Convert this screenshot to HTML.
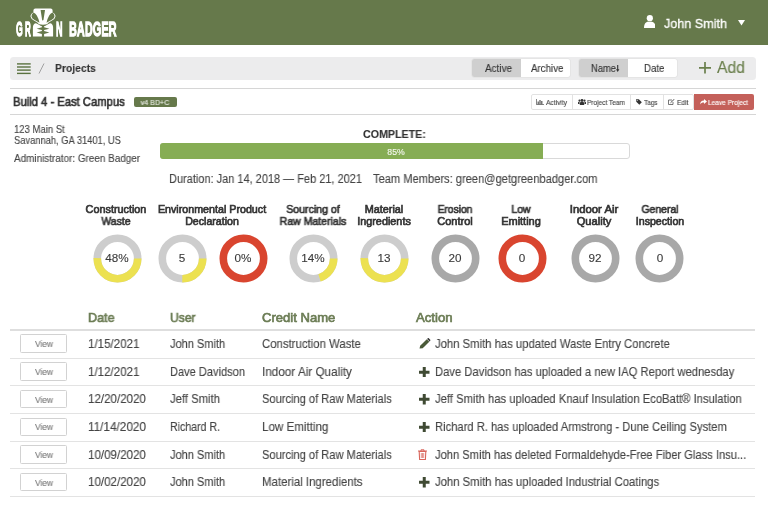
<!DOCTYPE html>
<html><head><meta charset="utf-8"><style>
html,body{margin:0;padding:0;background:#fff;width:768px;height:512px;overflow:hidden;}
body{position:relative;font-family:"Liberation Sans",sans-serif;}
.t{position:absolute;white-space:nowrap;will-change:transform;-webkit-text-stroke:0.12px currentColor;}
.r{position:absolute;}
</style></head><body>
<div class="r" style="left:0px;top:0px;width:768px;height:45px;background:#66794b;"></div>
<div class="t" style="left:15.7px;top:19px;font-size:20.6px;line-height:20.6px;font-weight:700;color:#fff;letter-spacing:0px;transform:scaleX(0.4244);transform-origin:0 50%;-webkit-text-stroke:1.4px #fff;">G</div>
<div class="t" style="left:25.1px;top:19px;font-size:20.6px;line-height:20.6px;font-weight:700;color:#fff;letter-spacing:0px;transform:scaleX(0.3899);transform-origin:0 50%;-webkit-text-stroke:1.4px #fff;">R</div>
<div class="t" style="left:55.8px;top:19px;font-size:20.6px;line-height:20.6px;font-weight:700;color:#fff;letter-spacing:0px;transform:scaleX(0.4369);transform-origin:0 50%;-webkit-text-stroke:1.4px #fff;">N</div>
<div class="t" style="left:69.1px;top:19px;font-size:20.6px;line-height:20.6px;font-weight:700;color:#fff;letter-spacing:0px;transform:scaleX(0.5332);transform-origin:0 50%;-webkit-text-stroke:1.3px #fff;">BADGER</div>
<svg class="r" style="left:26px;top:4px" width="36" height="36" viewBox="0 0 36 36">
<path d="M9.4 4.4 L24.6 4.4 Q26.6 4.4 26.6 6.4 L26.6 8.4 Q29.7 9.8 29.5 12.6 Q29.1 15.1 26 16.6 L22.6 18.6 Q21.6 20.8 17 20.8 Q12.4 20.8 11.4 18.6 L8 16.6 Q4.9 15.1 4.5 12.6 Q4.3 9.8 7.4 8.4 L7.4 6.4 Q7.4 4.4 9.4 4.4 Z" fill="#fff"/>
<path d="M14.6 6.0 L19.0 6.0 L17.5 15.8 L16.8 16.8 L16.1 15.8 Z" fill="#66794b"/>
<path d="M7.6 8.4 Q5.2 10 5.5 12.5 Q5.9 14.7 8.6 16.1 L13.5 18.7 Q12.8 14.8 10.8 11.4 Q9.6 9.4 7.6 8.4 Z" fill="#66794b"/>
<path d="M 26.40 8.40 Q 28.80 10.00 28.50 12.50 Q 28.10 14.70 25.40 16.10 L 20.50 18.70 Q 21.20 14.80 23.20 11.40 Q 24.40 9.40 26.40 8.40 Z" fill="#66794b"/>
<path d="M6.9 32.6 L6.9 23.5 C6.9 21 8.2 19.2 10 19.2 L12.5 20.6 L14.5 21.8 L15.9 22.3 L15.9 23.2 L10.6 24.7 L15.9 26 L15.9 27.1 L10.6 28.6 L15.9 29.9 L15.9 32.6 Z" fill="#fff"/>
<path d="M 27.10 32.60 L 27.10 23.50 C 27.10 21.00 25.80 19.20 24.00 19.20 L 21.50 20.60 L 19.50 21.80 L 18.10 22.30 L 18.10 23.20 L 23.40 24.70 L 18.10 26.00 L 18.10 27.10 L 23.40 28.60 L 18.10 29.90 L 18.10 32.60 Z" fill="#fff"/>
</svg>
<svg class="r" style="left:643.5px;top:15px" width="11.7" height="13" viewBox="0 0 11.7 13">
<circle cx="5.85" cy="3.2" r="3.1" fill="#fff"/>
<path d="M0 13 C0 9 1.8 6.8 4 6.8 L7.7 6.8 C9.9 6.8 11.7 9 11.7 13 Z" fill="#fff"/>
</svg>
<div class="t" style="left:663.9px;top:17px;font-size:13.5px;line-height:13.5px;font-weight:400;color:#fff;letter-spacing:0px;transform:scaleX(0.9329);transform-origin:0 50%;-webkit-text-stroke:0.3px #fff;">John Smith</div>
<svg class="r" style="left:737.6px;top:20.2px" width="7" height="5.6" viewBox="0 0 7 5.6"><path d="M0 0 L7 0 L3.5 5.6 Z" fill="#fff"/></svg>
<div class="r" style="left:9.5px;top:56.8px;width:746.5px;height:22.8px;background:#ececed;border-radius:3.5px;"></div>
<svg class="r" style="left:17.2px;top:62px" width="14" height="13" viewBox="0 0 14 13">
<rect x="0" y="1.2" width="13.7" height="1.4" fill="#5a7240"/>
<rect x="0" y="4.3" width="13.7" height="1.4" fill="#5a7240"/>
<rect x="0" y="7.4" width="13.7" height="1.4" fill="#5a7240"/>
<rect x="0" y="10.7" width="13.7" height="1.4" fill="#5a7240"/>
</svg>
<svg class="r" style="left:38px;top:63px" width="7" height="11" viewBox="0 0 7 11"><path d="M6 0.5 L1 10.5" stroke="#999" stroke-width="0.9"/></svg>
<div class="t" style="left:55.4px;top:62px;font-size:11.6px;line-height:11.6px;font-weight:700;color:#333;letter-spacing:0px;transform:scaleX(0.8935);transform-origin:0 50%;">Projects</div>
<div class="r" style="left:472px;top:59px;width:98px;height:18px;background:#fff;border-radius:2px;box-shadow:0 0 0 0.5px #ddd;"></div>
<div class="r" style="left:472px;top:59px;width:49px;height:18px;background:#cfcfcf;border-radius:2px 0 0 2px;"></div>
<div class="t" style="left:485px;top:63px;font-size:10.6px;line-height:10.6px;font-weight:400;color:#333;letter-spacing:0px;transform:scaleX(0.9354);transform-origin:0 50%;">Active</div>
<div class="t" style="left:531px;top:63px;font-size:10.6px;line-height:10.6px;font-weight:400;color:#333;letter-spacing:0px;transform:scaleX(0.9167);transform-origin:0 50%;">Archive</div>
<div class="r" style="left:578.5px;top:59px;width:98px;height:18px;background:#fff;border-radius:2px;box-shadow:0 0 0 0.5px #ddd;"></div>
<div class="r" style="left:578.5px;top:59px;width:49.5px;height:18px;background:#cfcfcf;border-radius:2px 0 0 2px;"></div>
<div class="t" style="left:590.8px;top:63px;font-size:10.6px;line-height:10.6px;font-weight:400;color:#333;letter-spacing:0px;transform:scaleX(0.8842);transform-origin:0 50%;">Name</div>
<svg class="r" style="left:616.3px;top:64.8px" width="3.4" height="7" viewBox="0 0 3.4 7"><path d="M1.7 0 V5" stroke="#333" stroke-width="1.1"/><path d="M0 4.2 L3.4 4.2 L1.7 7 Z" fill="#333"/></svg>
<div class="t" style="left:643.6px;top:63px;font-size:10.6px;line-height:10.6px;font-weight:400;color:#333;letter-spacing:0px;transform:scaleX(0.9111);transform-origin:0 50%;">Date</div>
<svg class="r" style="left:698.5px;top:62px" width="12" height="12" viewBox="0 0 12 12"><path d="M6 0 V11.6 M0 5.8 H12" stroke="#6a7f4c" stroke-width="1.7"/></svg>
<div class="t" style="left:717.0px;top:59px;font-size:16.2px;line-height:16.2px;font-weight:400;color:#6a7f4c;letter-spacing:0px;transform:scaleX(0.9714);transform-origin:0 50%;">Add</div>
<div class="r" style="left:10px;top:88px;width:746px;height:1px;background:#d6d6d6;"></div>
<div class="r" style="left:10px;top:114px;width:746px;height:1px;background:#d6d6d6;"></div>
<div class="t" style="left:13.2px;top:96px;font-size:12.2px;line-height:12.2px;font-weight:400;color:#333;letter-spacing:0px;transform:scaleX(0.9211);transform-origin:0 50%;-webkit-text-stroke:0.65px currentColor;">Build 4 - East Campus</div>
<div class="r" style="left:134px;top:96.6px;width:43px;height:10.4px;background:#66794b;border-radius:2px;"></div>
<div class="t" style="left:155.4px;top:99px;font-size:7.2px;line-height:7.2px;font-weight:400;color:#eef0ea;letter-spacing:0px;transform:translateX(-50%) scaleX(0.9927);transform-origin:50% 50%;">v4 BD+C</div>
<div class="r" style="left:530.5px;top:94px;width:163px;height:15.5px;background:#fff;border:1px solid #e2e2e2;border-radius:2px;box-sizing:border-box;"></div>
<div class="r" style="left:572px;top:94px;width:1px;height:15.5px;background:#e2e2e2;"></div>
<div class="r" style="left:630px;top:94px;width:1px;height:15.5px;background:#e2e2e2;"></div>
<div class="r" style="left:663px;top:94px;width:1px;height:15.5px;background:#e2e2e2;"></div>
<div class="r" style="left:693.5px;top:94px;width:60.5px;height:15.5px;background:#c4605a;border-radius:0 2px 2px 0;"></div>
<div class="t" style="left:546px;top:99px;font-size:7.3px;line-height:7.3px;font-weight:400;color:#444;letter-spacing:0px;transform:scaleX(0.9083);transform-origin:0 50%;">Activity</div>
<div class="t" style="left:587px;top:99px;font-size:7.3px;line-height:7.3px;font-weight:400;color:#444;letter-spacing:0px;transform:scaleX(0.8948);transform-origin:0 50%;">Project Team</div>
<div class="t" style="left:644px;top:99px;font-size:7.3px;line-height:7.3px;font-weight:400;color:#444;letter-spacing:0px;transform:scaleX(0.8755);transform-origin:0 50%;">Tags</div>
<div class="t" style="left:676.9px;top:99px;font-size:7.3px;line-height:7.3px;font-weight:400;color:#444;letter-spacing:0px;transform:scaleX(0.9063);transform-origin:0 50%;">Edit</div>
<div class="t" style="left:708px;top:99px;font-size:7.3px;line-height:7.3px;font-weight:400;color:#fff;letter-spacing:0px;transform:scaleX(0.8961);transform-origin:0 50%;">Leave Project</div>
<svg class="r" style="left:536px;top:99px" width="8" height="6" viewBox="0 0 8 6"><path d="M0.4 0 V5.6 H8" stroke="#555" stroke-width="0.8" fill="none"/><rect x="1.6" y="2.5" width="1.2" height="2.8" fill="#555"/><rect x="3.4" y="1" width="1.2" height="4.3" fill="#555"/><rect x="5.2" y="2" width="1.2" height="3.3" fill="#555"/></svg>
<svg class="r" style="left:578px;top:99px" width="8" height="6" viewBox="0 0 8 6"><circle cx="4" cy="1.5" r="1.4" fill="#333"/><circle cx="1.5" cy="1.7" r="1.1" fill="#333"/><circle cx="6.5" cy="1.7" r="1.1" fill="#333"/><path d="M1.8 6 V4 C1.8 3.2 2.5 3 4 3 C5.5 3 6.2 3.2 6.2 4 V6 Z" fill="#333"/><path d="M0 5 V3.6 C0 3 .5 3 1.5 3 L1.5 5Z M8 5 V3.6 C8 3 7.5 3 6.5 3 L6.5 5Z" fill="#333"/></svg>
<svg class="r" style="left:636px;top:99px" width="6" height="6" viewBox="0 0 6 6"><path d="M0 0.3 H2.8 L5.8 3.3 L3.3 5.8 L0.3 2.8 Z" fill="#333"/><circle cx="1.2" cy="1.4" r="0.5" fill="#fff"/></svg>
<svg class="r" style="left:668px;top:99px" width="7" height="6" viewBox="0 0 7 6"><path d="M4 1 H0.5 V5.5 H5 V3" stroke="#555" stroke-width="0.8" fill="none"/><path d="M2.5 3.8 L6.5 0" stroke="#555" stroke-width="1"/></svg>
<svg class="r" style="left:700px;top:99px" width="7" height="6" viewBox="0 0 7 6"><path d="M4 0 L7 2.5 L4 5 V3.5 C2 3.5 1 4 0 5.5 C0.3 3 1.5 1.6 4 1.5 Z" fill="#fff"/></svg>
<div class="t" style="left:14.2px;top:125px;font-size:10.4px;line-height:10.4px;font-weight:400;color:#444444;letter-spacing:0px;transform:scaleX(0.9144);transform-origin:0 50%;">123 Main St</div>
<div class="t" style="left:14.2px;top:136px;font-size:10.4px;line-height:10.4px;font-weight:400;color:#444444;letter-spacing:0px;transform:scaleX(0.8983);transform-origin:0 50%;">Savannah, GA 31401, US</div>
<div class="t" style="left:14.2px;top:154px;font-size:10.4px;line-height:10.4px;font-weight:400;color:#444444;letter-spacing:0px;transform:scaleX(0.9534);transform-origin:0 50%;">Administrator: Green Badger</div>
<div class="t" style="left:363px;top:129px;font-size:10.75px;line-height:10.75px;font-weight:700;color:#333;letter-spacing:0px;transform:scaleX(0.9920);transform-origin:0 50%;">COMPLETE:</div>
<div class="r" style="left:160px;top:143.2px;width:470px;height:16px;background:#fff;border:1px solid #d9d9d9;border-radius:3px;box-sizing:border-box;"></div>
<div class="r" style="left:160px;top:143.2px;width:383px;height:16px;background:#86ad54;border-radius:3px 0 0 3px;"></div>
<div class="t" style="left:396px;top:148px;font-size:8.7px;line-height:8.7px;font-weight:400;color:#f4f7ee;letter-spacing:0px;transform:translateX(-50%) scaleX(1.0000);transform-origin:50% 50%;">85%</div>
<div class="t" style="left:168.6px;top:173px;font-size:12.3px;line-height:12.3px;font-weight:400;color:#444444;letter-spacing:0px;transform:scaleX(0.8932);transform-origin:0 50%;">Duration: Jan 14, 2018 &#8212; Feb 21, 2021</div>
<div class="t" style="left:372.9px;top:173px;font-size:12.3px;line-height:12.3px;font-weight:400;color:#444444;letter-spacing:0px;transform:scaleX(0.9043);transform-origin:0 50%;">Team Members: green@getgreenbadger.com</div>
<svg class="r" style="left:92.8px;top:234.0px" width="49" height="49" viewBox="0 0 49 49"><circle cx="24.5" cy="24.5" r="20.2" fill="none" stroke="#cdcdcd" stroke-width="7.6"/><circle cx="24.5" cy="24.5" r="20.2" fill="none" stroke="#ece151" stroke-width="7.6" stroke-dasharray="63.46 126.92"/></svg>
<div class="t" style="left:117.3px;top:252px;font-size:11.7px;line-height:11.7px;font-weight:400;color:#3a3a3a;letter-spacing:0px;transform:translateX(-50%) scaleX(1.0000);transform-origin:50% 50%;">48%</div>
<svg class="r" style="left:157.5px;top:234.0px" width="49" height="49" viewBox="0 0 49 49"><circle cx="24.5" cy="24.5" r="20.2" fill="none" stroke="#cdcdcd" stroke-width="7.6"/><circle cx="24.5" cy="24.5" r="20.2" fill="none" stroke="#ece151" stroke-width="7.6" stroke-dasharray="31.73 126.92"/></svg>
<div class="t" style="left:182px;top:252px;font-size:11.7px;line-height:11.7px;font-weight:400;color:#3a3a3a;letter-spacing:0px;transform:translateX(-50%) scaleX(1.0000);transform-origin:50% 50%;">5</div>
<svg class="r" style="left:218.5px;top:234.0px" width="49" height="49" viewBox="0 0 49 49"><circle cx="24.5" cy="24.5" r="20.2" fill="none" stroke="#d9452f" stroke-width="7.6"/></svg>
<div class="t" style="left:243px;top:252px;font-size:11.7px;line-height:11.7px;font-weight:400;color:#3a3a3a;letter-spacing:0px;transform:translateX(-50%) scaleX(1.0000);transform-origin:50% 50%;">0%</div>
<svg class="r" style="left:288.5px;top:234.0px" width="49" height="49" viewBox="0 0 49 49"><circle cx="24.5" cy="24.5" r="20.2" fill="none" stroke="#cdcdcd" stroke-width="7.6"/><circle cx="24.5" cy="24.5" r="20.2" fill="none" stroke="#ece151" stroke-width="7.6" stroke-dasharray="25.38 126.92"/></svg>
<div class="t" style="left:313px;top:252px;font-size:11.7px;line-height:11.7px;font-weight:400;color:#3a3a3a;letter-spacing:0px;transform:translateX(-50%) scaleX(1.0000);transform-origin:50% 50%;">14%</div>
<svg class="r" style="left:359.5px;top:234.0px" width="49" height="49" viewBox="0 0 49 49"><circle cx="24.5" cy="24.5" r="20.2" fill="none" stroke="#cdcdcd" stroke-width="7.6"/><circle cx="24.5" cy="24.5" r="20.2" fill="none" stroke="#ece151" stroke-width="7.6" stroke-dasharray="63.46 126.92"/></svg>
<div class="t" style="left:384px;top:252px;font-size:11.7px;line-height:11.7px;font-weight:400;color:#3a3a3a;letter-spacing:0px;transform:translateX(-50%) scaleX(1.0000);transform-origin:50% 50%;">13</div>
<svg class="r" style="left:430.5px;top:234.0px" width="49" height="49" viewBox="0 0 49 49"><circle cx="24.5" cy="24.5" r="20.2" fill="none" stroke="#a8a8a8" stroke-width="7.6"/></svg>
<div class="t" style="left:455px;top:252px;font-size:11.7px;line-height:11.7px;font-weight:400;color:#3a3a3a;letter-spacing:0px;transform:translateX(-50%) scaleX(1.0000);transform-origin:50% 50%;">20</div>
<svg class="r" style="left:497.5px;top:234.0px" width="49" height="49" viewBox="0 0 49 49"><circle cx="24.5" cy="24.5" r="20.2" fill="none" stroke="#d9452f" stroke-width="7.6"/></svg>
<div class="t" style="left:522px;top:252px;font-size:11.7px;line-height:11.7px;font-weight:400;color:#3a3a3a;letter-spacing:0px;transform:translateX(-50%) scaleX(1.0000);transform-origin:50% 50%;">0</div>
<svg class="r" style="left:570.5px;top:234.0px" width="49" height="49" viewBox="0 0 49 49"><circle cx="24.5" cy="24.5" r="20.2" fill="none" stroke="#a8a8a8" stroke-width="7.6"/></svg>
<div class="t" style="left:595px;top:252px;font-size:11.7px;line-height:11.7px;font-weight:400;color:#3a3a3a;letter-spacing:0px;transform:translateX(-50%) scaleX(1.0000);transform-origin:50% 50%;">92</div>
<svg class="r" style="left:635.3px;top:234.0px" width="49" height="49" viewBox="0 0 49 49"><circle cx="24.5" cy="24.5" r="20.2" fill="none" stroke="#a8a8a8" stroke-width="7.6"/></svg>
<div class="t" style="left:659.8px;top:252px;font-size:11.7px;line-height:11.7px;font-weight:400;color:#3a3a3a;letter-spacing:0px;transform:translateX(-50%) scaleX(1.0000);transform-origin:50% 50%;">0</div>
<div class="t" style="left:115.6px;top:204px;font-size:10.6px;line-height:10.6px;font-weight:400;color:#333;letter-spacing:0px;transform:translateX(-50%) scaleX(1.0217);transform-origin:50% 50%;-webkit-text-stroke:0.65px currentColor;">Construction</div>
<div class="t" style="left:115.6px;top:216px;font-size:10.6px;line-height:10.6px;font-weight:400;color:#333;letter-spacing:0px;transform:translateX(-50%) scaleX(0.9849);transform-origin:50% 50%;-webkit-text-stroke:0.65px currentColor;">Waste</div>
<div class="t" style="left:211.7px;top:204px;font-size:10.6px;line-height:10.6px;font-weight:400;color:#333;letter-spacing:0px;transform:translateX(-50%) scaleX(1.0100);transform-origin:50% 50%;-webkit-text-stroke:0.65px currentColor;">Environmental Product</div>
<div class="t" style="left:211.7px;top:216px;font-size:10.6px;line-height:10.6px;font-weight:400;color:#333;letter-spacing:0px;transform:translateX(-50%) scaleX(1.0016);transform-origin:50% 50%;-webkit-text-stroke:0.65px currentColor;">Declaration</div>
<div class="t" style="left:313.2px;top:204px;font-size:10.6px;line-height:10.6px;font-weight:400;color:#333;letter-spacing:0px;transform:translateX(-50%) scaleX(0.9977);transform-origin:50% 50%;-webkit-text-stroke:0.65px currentColor;">Sourcing of</div>
<div class="t" style="left:313.2px;top:216px;font-size:10.6px;line-height:10.6px;font-weight:400;color:#333;letter-spacing:0px;transform:translateX(-50%) scaleX(0.9948);transform-origin:50% 50%;-webkit-text-stroke:0.65px currentColor;">Raw Materials</div>
<div class="t" style="left:383.8px;top:204px;font-size:10.6px;line-height:10.6px;font-weight:400;color:#333;letter-spacing:0px;transform:translateX(-50%) scaleX(1.0212);transform-origin:50% 50%;-webkit-text-stroke:0.65px currentColor;">Material</div>
<div class="t" style="left:383.8px;top:216px;font-size:10.6px;line-height:10.6px;font-weight:400;color:#333;letter-spacing:0px;transform:translateX(-50%) scaleX(1.0239);transform-origin:50% 50%;-webkit-text-stroke:0.65px currentColor;">Ingredients</div>
<div class="t" style="left:455px;top:204px;font-size:10.6px;line-height:10.6px;font-weight:400;color:#333;letter-spacing:0px;transform:translateX(-50%) scaleX(0.9627);transform-origin:50% 50%;-webkit-text-stroke:0.65px currentColor;">Erosion</div>
<div class="t" style="left:455px;top:216px;font-size:10.6px;line-height:10.6px;font-weight:400;color:#333;letter-spacing:0px;transform:translateX(-50%) scaleX(1.0418);transform-origin:50% 50%;-webkit-text-stroke:0.65px currentColor;">Control</div>
<div class="t" style="left:520.8px;top:204px;font-size:10.6px;line-height:10.6px;font-weight:400;color:#333;letter-spacing:0px;transform:translateX(-50%) scaleX(0.9874);transform-origin:50% 50%;-webkit-text-stroke:0.65px currentColor;">Low</div>
<div class="t" style="left:520.8px;top:216px;font-size:10.6px;line-height:10.6px;font-weight:400;color:#333;letter-spacing:0px;transform:translateX(-50%) scaleX(1.0368);transform-origin:50% 50%;-webkit-text-stroke:0.65px currentColor;">Emitting</div>
<div class="t" style="left:594px;top:204px;font-size:10.6px;line-height:10.6px;font-weight:400;color:#333;letter-spacing:0px;transform:translateX(-50%) scaleX(1.0690);transform-origin:50% 50%;-webkit-text-stroke:0.65px currentColor;">Indoor Air</div>
<div class="t" style="left:594px;top:216px;font-size:10.6px;line-height:10.6px;font-weight:400;color:#333;letter-spacing:0px;transform:translateX(-50%) scaleX(1.0488);transform-origin:50% 50%;-webkit-text-stroke:0.65px currentColor;">Quality</div>
<div class="t" style="left:659.5px;top:204px;font-size:10.6px;line-height:10.6px;font-weight:400;color:#333;letter-spacing:0px;transform:translateX(-50%) scaleX(0.9811);transform-origin:50% 50%;-webkit-text-stroke:0.65px currentColor;">General</div>
<div class="t" style="left:659.5px;top:216px;font-size:10.6px;line-height:10.6px;font-weight:400;color:#333;letter-spacing:0px;transform:translateX(-50%) scaleX(1.0037);transform-origin:50% 50%;-webkit-text-stroke:0.65px currentColor;">Inspection</div>
<div class="t" style="left:88px;top:312px;font-size:12.8px;line-height:12.8px;font-weight:400;color:#6b7c54;letter-spacing:0px;transform:scaleX(0.9801);transform-origin:0 50%;-webkit-text-stroke:0.65px currentColor;">Date</div>
<div class="t" style="left:169.5px;top:312px;font-size:12.8px;line-height:12.8px;font-weight:400;color:#6b7c54;letter-spacing:0px;transform:scaleX(0.9436);transform-origin:0 50%;-webkit-text-stroke:0.65px currentColor;">User</div>
<div class="t" style="left:262.2px;top:312px;font-size:12.8px;line-height:12.8px;font-weight:400;color:#6b7c54;letter-spacing:0px;transform:scaleX(1.0203);transform-origin:0 50%;-webkit-text-stroke:0.65px currentColor;">Credit Name</div>
<div class="t" style="left:415.8px;top:312px;font-size:12.8px;line-height:12.8px;font-weight:400;color:#6b7c54;letter-spacing:0px;transform:scaleX(1.0288);transform-origin:0 50%;-webkit-text-stroke:0.65px currentColor;">Action</div>
<div class="r" style="left:10px;top:329px;width:745px;height:1.5px;background:#dedede;"></div>
<div class="r" style="left:20.2px;top:334.25px;width:46.4px;height:18.4px;background:#fff;border:1px solid #d2d2d2;border-radius:1.5px;box-sizing:border-box;"></div>
<div class="t" style="left:43.7px;top:340px;font-size:9.2px;line-height:9.2px;font-weight:400;color:#777;letter-spacing:0px;transform:translateX(-50%) scaleX(0.9153);transform-origin:50% 50%;">View</div>
<div class="t" style="left:87.6px;top:338px;font-size:12.4px;line-height:12.4px;font-weight:400;color:#444444;letter-spacing:0px;transform:scaleX(0.9336);transform-origin:0 50%;">1/15/2021</div>
<div class="t" style="left:169.5px;top:338px;font-size:12.4px;line-height:12.4px;font-weight:400;color:#444444;letter-spacing:0px;transform:scaleX(0.8899);transform-origin:0 50%;">John Smith</div>
<div class="t" style="left:261.5px;top:338px;font-size:12.4px;line-height:12.4px;font-weight:400;color:#444444;letter-spacing:0px;transform:scaleX(0.9180);transform-origin:0 50%;">Construction Waste</div>
<svg class="r" style="left:419px;top:338.1px" width="12" height="11" viewBox="0 0 12 11"><path d="M0.5 10.5 L1.2 7.8 L7.8 1.2 L10.3 3.7 L3.7 10.3 Z" fill="#4a5a38"/><path d="M8.6 0.4 C9 0 9.6 0 10 0.4 L11.1 1.5 C11.5 1.9 11.5 2.5 11.1 2.9 L10.6 3.4 L8.1 0.9 Z" fill="#3a3a3a"/></svg>
<div class="t" style="left:434.8px;top:338px;font-size:12.4px;line-height:12.4px;font-weight:400;color:#444444;letter-spacing:0px;transform:scaleX(0.9108);transform-origin:0 50%;">John Smith has updated Waste Entry Concrete</div>
<div class="r" style="left:10px;top:357.6px;width:745px;height:1px;background:#e3e3e3;"></div>
<div class="r" style="left:20.2px;top:362.2px;width:46.4px;height:18.4px;background:#fff;border:1px solid #d2d2d2;border-radius:1.5px;box-sizing:border-box;"></div>
<div class="t" style="left:43.7px;top:368px;font-size:9.2px;line-height:9.2px;font-weight:400;color:#777;letter-spacing:0px;transform:translateX(-50%) scaleX(0.9153);transform-origin:50% 50%;">View</div>
<div class="t" style="left:87.6px;top:366px;font-size:12.4px;line-height:12.4px;font-weight:400;color:#444444;letter-spacing:0px;transform:scaleX(0.9336);transform-origin:0 50%;">1/12/2021</div>
<div class="t" style="left:169.5px;top:366px;font-size:12.4px;line-height:12.4px;font-weight:400;color:#444444;letter-spacing:0px;transform:scaleX(0.8919);transform-origin:0 50%;">Dave Davidson</div>
<div class="t" style="left:261.5px;top:366px;font-size:12.4px;line-height:12.4px;font-weight:400;color:#444444;letter-spacing:0px;transform:scaleX(0.9462);transform-origin:0 50%;">Indoor Air Quality</div>
<svg class="r" style="left:419px;top:366.5px" width="10.5" height="10.5" viewBox="0 0 10.5 10.5"><path d="M5.25 0 V10.5 M0 5.25 H10.5" stroke="#3f4a33" stroke-width="3"/></svg>
<div class="t" style="left:434.8px;top:366px;font-size:12.4px;line-height:12.4px;font-weight:400;color:#444444;letter-spacing:0px;transform:scaleX(0.9071);transform-origin:0 50%;">Dave Davidson has uploaded a new IAQ Report wednesday</div>
<div class="r" style="left:10px;top:385.4px;width:745px;height:1px;background:#e3e3e3;"></div>
<div class="r" style="left:20.2px;top:389.9px;width:46.4px;height:18.4px;background:#fff;border:1px solid #d2d2d2;border-radius:1.5px;box-sizing:border-box;"></div>
<div class="t" style="left:43.7px;top:396px;font-size:9.2px;line-height:9.2px;font-weight:400;color:#777;letter-spacing:0px;transform:translateX(-50%) scaleX(0.9153);transform-origin:50% 50%;">View</div>
<div class="t" style="left:87.6px;top:393px;font-size:12.4px;line-height:12.4px;font-weight:400;color:#444444;letter-spacing:0px;transform:scaleX(0.9346);transform-origin:0 50%;">12/20/2020</div>
<div class="t" style="left:169.5px;top:393px;font-size:12.4px;line-height:12.4px;font-weight:400;color:#444444;letter-spacing:0px;transform:scaleX(0.9107);transform-origin:0 50%;">Jeff Smith</div>
<div class="t" style="left:261.5px;top:393px;font-size:12.4px;line-height:12.4px;font-weight:400;color:#444444;letter-spacing:0px;transform:scaleX(0.8969);transform-origin:0 50%;">Sourcing of Raw Materials</div>
<svg class="r" style="left:419px;top:394.2px" width="10.5" height="10.5" viewBox="0 0 10.5 10.5"><path d="M5.25 0 V10.5 M0 5.25 H10.5" stroke="#3f4a33" stroke-width="3"/></svg>
<div class="t" style="left:434.8px;top:393px;font-size:12.4px;line-height:12.4px;font-weight:400;color:#444444;letter-spacing:0px;transform:scaleX(0.9090);transform-origin:0 50%;">Jeff Smith has uploaded Knauf Insulation EcoBatt&#174; Insulation</div>
<div class="r" style="left:10px;top:413px;width:745px;height:1px;background:#e3e3e3;"></div>
<div class="r" style="left:20.2px;top:417.55px;width:46.4px;height:18.4px;background:#fff;border:1px solid #d2d2d2;border-radius:1.5px;box-sizing:border-box;"></div>
<div class="t" style="left:43.7px;top:423px;font-size:9.2px;line-height:9.2px;font-weight:400;color:#777;letter-spacing:0px;transform:translateX(-50%) scaleX(0.9153);transform-origin:50% 50%;">View</div>
<div class="t" style="left:87.6px;top:421px;font-size:12.4px;line-height:12.4px;font-weight:400;color:#444444;letter-spacing:0px;transform:scaleX(0.9486);transform-origin:0 50%;">11/14/2020</div>
<div class="t" style="left:169.5px;top:421px;font-size:12.4px;line-height:12.4px;font-weight:400;color:#444444;letter-spacing:0px;transform:scaleX(0.8536);transform-origin:0 50%;">Richard R.</div>
<div class="t" style="left:261.5px;top:421px;font-size:12.4px;line-height:12.4px;font-weight:400;color:#444444;letter-spacing:0px;transform:scaleX(0.9354);transform-origin:0 50%;">Low Emitting</div>
<svg class="r" style="left:419px;top:421.9px" width="10.5" height="10.5" viewBox="0 0 10.5 10.5"><path d="M5.25 0 V10.5 M0 5.25 H10.5" stroke="#3f4a33" stroke-width="3"/></svg>
<div class="t" style="left:434.8px;top:421px;font-size:12.4px;line-height:12.4px;font-weight:400;color:#444444;letter-spacing:0px;transform:scaleX(0.9033);transform-origin:0 50%;">Richard R. has uploaded Armstrong - Dune Ceiling System</div>
<div class="r" style="left:10px;top:440.7px;width:745px;height:1px;background:#e3e3e3;"></div>
<div class="r" style="left:20.2px;top:445.15px;width:46.4px;height:18.4px;background:#fff;border:1px solid #d2d2d2;border-radius:1.5px;box-sizing:border-box;"></div>
<div class="t" style="left:43.7px;top:451px;font-size:9.2px;line-height:9.2px;font-weight:400;color:#777;letter-spacing:0px;transform:translateX(-50%) scaleX(0.9153);transform-origin:50% 50%;">View</div>
<div class="t" style="left:87.6px;top:449px;font-size:12.4px;line-height:12.4px;font-weight:400;color:#444444;letter-spacing:0px;transform:scaleX(0.9346);transform-origin:0 50%;">10/09/2020</div>
<div class="t" style="left:169.5px;top:449px;font-size:12.4px;line-height:12.4px;font-weight:400;color:#444444;letter-spacing:0px;transform:scaleX(0.8899);transform-origin:0 50%;">John Smith</div>
<div class="t" style="left:261.5px;top:449px;font-size:12.4px;line-height:12.4px;font-weight:400;color:#444444;letter-spacing:0px;transform:scaleX(0.8969);transform-origin:0 50%;">Sourcing of Raw Materials</div>
<svg class="r" style="left:418px;top:448.9px" width="9" height="11" viewBox="0 0 9 11"><path d="M0 2 H9 M3 2 V0.8 H6 V2" stroke="#d9665c" stroke-width="1" fill="none"/><path d="M1.2 2.5 H7.8 L7.4 10.5 H1.6 Z" stroke="#d9665c" stroke-width="1.1" fill="none"/><path d="M3.3 4 V9 M4.5 4 V9 M5.7 4 V9" stroke="#d9665c" stroke-width="0.7"/></svg>
<div class="t" style="left:434.8px;top:449px;font-size:12.4px;line-height:12.4px;font-weight:400;color:#444444;letter-spacing:0px;transform:scaleX(0.9003);transform-origin:0 50%;">John Smith has deleted Formaldehyde-Free Fiber Glass Insu...</div>
<div class="r" style="left:10px;top:468.2px;width:745px;height:1px;background:#e3e3e3;"></div>
<div class="r" style="left:20.2px;top:472.8px;width:46.4px;height:18.4px;background:#fff;border:1px solid #d2d2d2;border-radius:1.5px;box-sizing:border-box;"></div>
<div class="t" style="left:43.7px;top:479px;font-size:9.2px;line-height:9.2px;font-weight:400;color:#777;letter-spacing:0px;transform:translateX(-50%) scaleX(0.9153);transform-origin:50% 50%;">View</div>
<div class="t" style="left:87.6px;top:476px;font-size:12.4px;line-height:12.4px;font-weight:400;color:#444444;letter-spacing:0px;transform:scaleX(0.9346);transform-origin:0 50%;">10/02/2020</div>
<div class="t" style="left:169.5px;top:476px;font-size:12.4px;line-height:12.4px;font-weight:400;color:#444444;letter-spacing:0px;transform:scaleX(0.8899);transform-origin:0 50%;">John Smith</div>
<div class="t" style="left:261.5px;top:476px;font-size:12.4px;line-height:12.4px;font-weight:400;color:#444444;letter-spacing:0px;transform:scaleX(0.9238);transform-origin:0 50%;">Material Ingredients</div>
<svg class="r" style="left:419px;top:477.1px" width="10.5" height="10.5" viewBox="0 0 10.5 10.5"><path d="M5.25 0 V10.5 M0 5.25 H10.5" stroke="#3f4a33" stroke-width="3"/></svg>
<div class="t" style="left:434.8px;top:476px;font-size:12.4px;line-height:12.4px;font-weight:400;color:#444444;letter-spacing:0px;transform:scaleX(0.9115);transform-origin:0 50%;">John Smith has uploaded Industrial Coatings</div>
<div class="r" style="left:10px;top:496px;width:745px;height:1px;background:#e3e3e3;"></div>
</body></html>
